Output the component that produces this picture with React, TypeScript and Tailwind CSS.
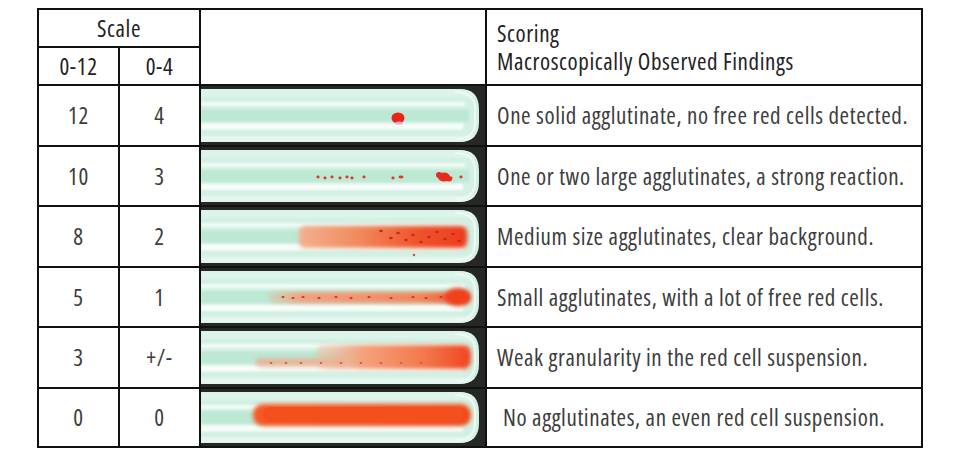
import React from 'react'

type Row = { a: string; b: string; text: string; pad?: string; h: string; tube: React.ReactNode }

const W = 284

function TubeBase({ h, id, children }: { h: number; id: string; children?: React.ReactNode }) {
  const top = 3
  const bot = h - 3
  const r = 20
  const end = W - 6
  const tubePath = `M0,${top} H${end - r} Q${end},${top} ${end},${top + r} V${bot - r} Q${end},${bot} ${end - r},${bot} H0 Z`
  const mid = (top + bot) / 2
  return (
    <svg width="100%" height="100%" viewBox={`0 0 ${W} ${h}`} preserveAspectRatio="none" className="block">
      <defs>
        <filter id={`blur-${id}`} x="-20%" y="-50%" width="140%" height="200%">
          <feGaussianBlur stdDeviation="2" />
        </filter>
        <filter id={`soft-${id}`} x="-5%" y="-50%" width="110%" height="200%">
          <feGaussianBlur stdDeviation="0.8" />
        </filter>
        <clipPath id={`clip-${id}`}>
          <path d={tubePath} />
        </clipPath>
      </defs>
      <rect width={W} height={h} fill="#262826" />
      <path d={tubePath} fill="#d2f0e3" />
      <g clipPath={`url(#clip-${id})`} filter={`url(#soft-${id})`}>
        <rect x="0" y={top} width={W} height="8" fill="#dcf4ea" />
        <rect x="0" y={top + 13} width={end - 14} height="4" fill="#f1fbf6" />
        <rect x="0" y={mid - 6} width={end - 10} height="12" fill="#bce8d4" />
        <rect x="0" y={mid + 8} width={end - 16} height="6" fill="#f8fdfa" />
        <rect x="0" y={bot - 6} width={W} height="6" fill="#e6f7f0" />
      </g>
      <path
        d={`M${end - r - 4},${top + 3} Q${end - 4},${top + 3} ${end - 4},${top + r} V${bot - r} Q${end - 4},${bot - 3} ${end - r - 4},${bot - 3}`}
        fill="none"
        stroke="#eef9f4"
        strokeWidth="2"
      />
      <g clipPath={`url(#clip-${id})`}>{children}</g>
    </svg>
  )
}

function Tube12() {
  return (
    <TubeBase h={59} id="t12">
      <ellipse cx="197" cy="32" rx="6.5" ry="5.5" fill="#e8231a" />
      <ellipse cx="198" cy="37" rx="4" ry="1.5" fill="#e7a6d8" />
    </TubeBase>
  )
}

function Tube10() {
  const specks = [117, 124, 131, 139, 146, 151, 163, 192, 200, 250, 260]
  return (
    <TubeBase h={58} id="t10">
      {specks.map((x, i) => (
        <ellipse key={i} cx={x} cy={30 + (i % 2)} rx={i === 8 ? 2.5 : 1.6} ry="1.4" fill="#e0392a" />
      ))}
      <ellipse cx="243" cy="30" rx="6" ry="4.5" fill="#e8291c" />
      <ellipse cx="238" cy="28" rx="3" ry="3" fill="#e8291c" />
      <ellipse cx="248" cy="32" rx="3" ry="2.5" fill="#e8291c" />
    </TubeBase>
  )
}

function Tube8() {
  const dots = [180, 190, 197, 205, 212, 220, 228, 236, 244, 252, 258]
  return (
    <TubeBase h={59} id="t8">
      <defs>
        <linearGradient id="g8" x1="0" x2="1" y1="0" y2="0">
          <stop offset="0" stopColor="#f4b08e" />
          <stop offset="0.35" stopColor="#f28a5e" />
          <stop offset="0.7" stopColor="#f0542c" />
          <stop offset="1" stopColor="#ee3b1d" />
        </linearGradient>
      </defs>
      <rect x="98" y="19" width="168" height="22" rx="6" fill="url(#g8)" filter="url(#blur-t8)" />
      {dots.map((x, i) => (
        <ellipse key={i} cx={x} cy={24 + ((i * 7) % 12)} rx="1.8" ry="1.3" fill="#c72a1a" />
      ))}
      <ellipse cx="213" cy="48" rx="1.2" ry="1.2" fill="#d24a3a" />
    </TubeBase>
  )
}

function Tube5() {
  const dots = [82, 92, 102, 118, 135, 150, 168, 190, 212, 225, 240]
  return (
    <TubeBase h={58} id="t5">
      <defs>
        <linearGradient id="g5" x1="0" x2="1" y1="0" y2="0">
          <stop offset="0" stopColor="#d8c4a4" stopOpacity="0.5" />
          <stop offset="0.15" stopColor="#f0a282" />
          <stop offset="0.75" stopColor="#f3855c" />
          <stop offset="1" stopColor="#f04a22" />
        </linearGradient>
      </defs>
      <rect x="68" y="24" width="200" height="11" rx="4" fill="url(#g5)" filter="url(#blur-t5)" />
      <ellipse cx="257" cy="29" rx="13" ry="9" fill="#f0401c" filter="url(#blur-t5)" />
      {dots.map((x, i) => (
        <ellipse key={i} cx={x} cy={29 + (i % 2)} rx="1.6" ry="1" fill="#d2321e" />
      ))}
    </TubeBase>
  )
}

function Tube3() {
  return (
    <TubeBase h={59} id="t3">
      <defs>
        <linearGradient id="g3" x1="0" x2="1" y1="0" y2="0">
          <stop offset="0" stopColor="#f2b79c" stopOpacity="0.4" />
          <stop offset="0.3" stopColor="#f4a27c" />
          <stop offset="0.7" stopColor="#f3784c" />
          <stop offset="1" stopColor="#f04520" />
        </linearGradient>
      </defs>
      <rect x="55" y="30" width="90" height="9" rx="4" fill="#f2a585" opacity="0.7" filter="url(#blur-t3)" />
      <rect x="115" y="17" width="155" height="24" rx="8" fill="url(#g3)" filter="url(#blur-t3)" />
      {[70, 85, 100, 120, 140, 160, 180, 200, 220].map((x, i) => (
        <ellipse key={i} cx={x} cy={35} rx="1.4" ry="0.9" fill="#d85a3e" />
      ))}
    </TubeBase>
  )
}

function Tube0() {
  return (
    <TubeBase h={57} id="t0">
      <defs>
        <linearGradient id="g0" x1="0" x2="1" y1="0" y2="0">
          <stop offset="0" stopColor="#f55a25" />
          <stop offset="1" stopColor="#f34a1c" />
        </linearGradient>
      </defs>
      <rect x="52" y="15" width="218" height="22" rx="10" fill="url(#g0)" filter="url(#blur-t0)" />
      <rect x="62" y="18" width="200" height="15" rx="7" fill="#f4501e" />
    </TubeBase>
  )
}

const rows: Row[] = [
  { a: '12', b: '4', text: 'One solid agglutinate, no free red cells detected.', h: 'h-[59px]', tube: <Tube12 /> },
  { a: '10', b: '3', text: 'One or two large agglutinates, a strong reaction.', h: 'h-[58px]', tube: <Tube10 /> },
  { a: '8', b: '2', text: 'Medium size agglutinates, clear background.', h: 'h-[59px]', tube: <Tube8 /> },
  { a: '5', b: '1', text: 'Small agglutinates, with a lot of free red cells.', h: 'h-[58px]', tube: <Tube5 /> },
  { a: '3', b: '+/-', text: 'Weak granularity in the red cell suspension.', h: 'h-[59px]', tube: <Tube3 /> },
  { a: '0', b: '0', text: 'No agglutinates, an even red cell suspension.', pad: 'pl-[16px]', h: 'h-[57px]', tube: <Tube0 /> },
]

export default function App() {
  return (
    <div className="w-[955px] h-[462px] bg-white pt-[8px] pl-[37px] font-['Open_Sans','Roboto',sans-serif] [font-stretch:condensed] text-[23px] tracking-[0.6px]">
      <div className="grid grid-cols-[79px_79px_284px_434px] gap-[2px] bg-[#111] p-[2px] w-[886px]">
        <div className="col-span-2 h-[36px] bg-white flex items-center justify-center text-[#222]">Scale</div>
        <div className="row-span-2 bg-white" />
        <div className="row-span-2 bg-white flex flex-col justify-center pl-[10px] leading-[28px] text-[#222]">
          <span>Scoring</span>
          <span>Macroscopically Observed Findings</span>
        </div>
        <div className="h-[36px] bg-white flex items-center justify-center text-[#222]">0-12</div>
        <div className="h-[36px] bg-white flex items-center justify-center text-[#222]">0-4</div>
        {rows.map(r => (
          <React.Fragment key={r.a}>
            <div className={`${r.h} bg-white flex items-center justify-center text-[#3d3d3d]`}>{r.a}</div>
            <div className={`${r.h} bg-white flex items-center justify-center text-[#3d3d3d]`}>{r.b}</div>
            <div className={`${r.h} bg-[#262826]`}>{r.tube}</div>
            <div className={`${r.h} bg-white flex items-center ${r.pad ?? 'pl-[10px]'} text-[#3d3d3d]`}>{r.text}</div>
          </React.Fragment>
        ))}
      </div>
    </div>
  )
}
